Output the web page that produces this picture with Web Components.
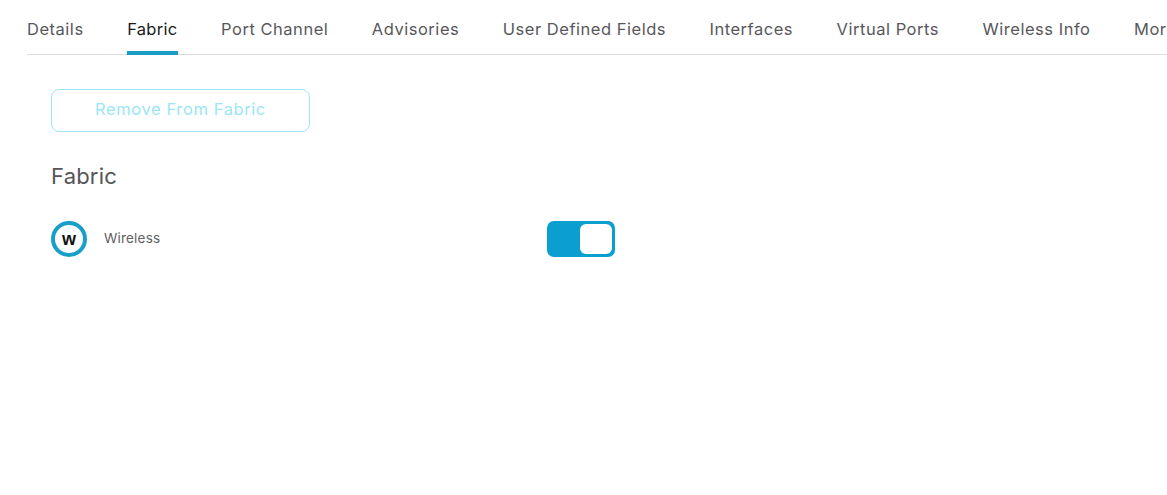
<!DOCTYPE html>
<html>
<head>
<meta charset="utf-8">
<style>
html, body { margin: 0; background: #fff; overflow: hidden; }
body { font-family: Inter, "Liberation Sans", sans-serif; }
</style>
</head>
<body>
<device-page>
  <tab-bar>
    <tab-item>Details</tab-item>
    <tab-item active>Fabric</tab-item>
    <tab-item>Port Channel</tab-item>
    <tab-item>Advisories</tab-item>
    <tab-item>User Defined Fields</tab-item>
    <tab-item>Interfaces</tab-item>
    <tab-item>Virtual Ports</tab-item>
    <tab-item>Wireless Info</tab-item>
    <tab-item>More</tab-item>
  </tab-bar>
  <fabric-panel>
    <outline-button>Remove From Fabric</outline-button>
    <h2 slot="title">Fabric</h2>
    <fabric-row letter="w">Wireless</fabric-row>
  </fabric-panel>
</device-page>

<script>
const pageTpl = document.createElement("template");
pageTpl.innerHTML = `
<style>
:host { display: block; width: 1167px; height: 495px; overflow: hidden; box-sizing: border-box; }
</style>
<slot></slot>`;

class DevicePage extends HTMLElement {
  constructor() {
    super();
    this.attachShadow({mode: "open"}).append(pageTpl.content.cloneNode(true));
  }
}
customElements.define("device-page", DevicePage);

const barTpl = document.createElement("template");
barTpl.innerHTML = `
<style>
/* line is a shadow so the active tab can sit on top of it */
:host { display: flex; gap: 43.5px; margin-left: 27px; height: 55px; box-shadow: inset 0 -1px #dcdcdc; white-space: nowrap; overflow: hidden; }
</style>
<slot></slot>`;

class TabBar extends HTMLElement {
  constructor() {
    super();
    this.attachShadow({mode: "open"}).append(barTpl.content.cloneNode(true));
  }
}
customElements.define("tab-bar", TabBar);

const tabTpl = document.createElement("template");
tabTpl.innerHTML = `
<style>
:host { display: block; height: 55px; box-sizing: border-box; padding-top: 19px; font: 400 16.5px/20px Inter, sans-serif; letter-spacing: 0.52px; color: #58585b; flex: none; }
:host([active]) { color: #1a1a1a; border-bottom: 4px solid #1b9cc4; letter-spacing: 0.3px; }
</style>
<slot></slot>`;

class TabItem extends HTMLElement {
  constructor() {
    super();
    this.attachShadow({mode: "open"}).append(tabTpl.content.cloneNode(true));
  }
}
customElements.define("tab-item", TabItem);

const panelTpl = document.createElement("template");
panelTpl.innerHTML = `
<style>
:host { display: flex; flex-direction: column; align-items: flex-start; padding: 34px 0 0 51px; }
::slotted(h2) { margin: 30px 0 31px; font: 400 22px/28px Inter, sans-serif; letter-spacing: 0.2px; color: #555558; }
</style>
<slot></slot>
<slot name="title"></slot>
<slot name="row"></slot>`;

class FabricPanel extends HTMLElement {
  constructor() {
    super();
    this.attachShadow({mode: "open"}).append(panelTpl.content.cloneNode(true));
    // button goes first, the row has to come after the heading
    const row = this.querySelector("fabric-row");
    if (row) row.setAttribute("slot", "row");
  }
}
customElements.define("fabric-panel", FabricPanel);

const btnTpl = document.createElement("template");
btnTpl.innerHTML = `
<style>
:host { display: flex; align-items: center; justify-content: center; width: 259px; height: 43px; box-sizing: border-box; border: 1px solid #9ce4f2; border-radius: 8px; font: 400 16.5px/20px Inter, sans-serif; letter-spacing: 0.6px; color: #9be6f6; padding-bottom: 4px; }
</style>
<slot></slot>`;

class OutlineButton extends HTMLElement {
  constructor() {
    super();
    this.attachShadow({mode: "open"}).append(btnTpl.content.cloneNode(true));
  }
}
customElements.define("outline-button", OutlineButton);

const rowTpl = document.createElement("template");
rowTpl.innerHTML = `
<style>
:host { display: flex; align-items: center; width: 564px; height: 36px; }
.badge { width: 36px; height: 36px; box-sizing: border-box; border: 4px solid #179fca; border-radius: 50%; display: flex; align-items: center; justify-content: center; font: 700 18px/1 "Liberation Sans", sans-serif; color: #111; flex: none; padding-bottom: 1px; }
.label { margin-left: 17px; font: 400 13.5px/18px Inter, sans-serif; letter-spacing: 0.2px; color: #5f5f62; flex: 1; padding-bottom: 2px; }
.toggle { width: 68px; height: 36px; box-sizing: border-box; padding: 3px; background: #0a9fcf; border-radius: 7px; display: flex; justify-content: flex-end; flex: none; }
.knob { width: 32px; height: 30px; background: #fff; border-radius: 6px; }
</style>
<div class="badge"></div>
<div class="label"><slot></slot></div>
<div class="toggle"><div class="knob"></div></div>`;

class FabricRow extends HTMLElement {
  constructor() {
    super();
    const shadow = this.attachShadow({mode: "open"});
    shadow.append(rowTpl.content.cloneNode(true));
    shadow.querySelector(".badge").textContent = this.getAttribute("letter") || "";
  }
}
customElements.define("fabric-row", FabricRow);
</script>
</body>
</html>
